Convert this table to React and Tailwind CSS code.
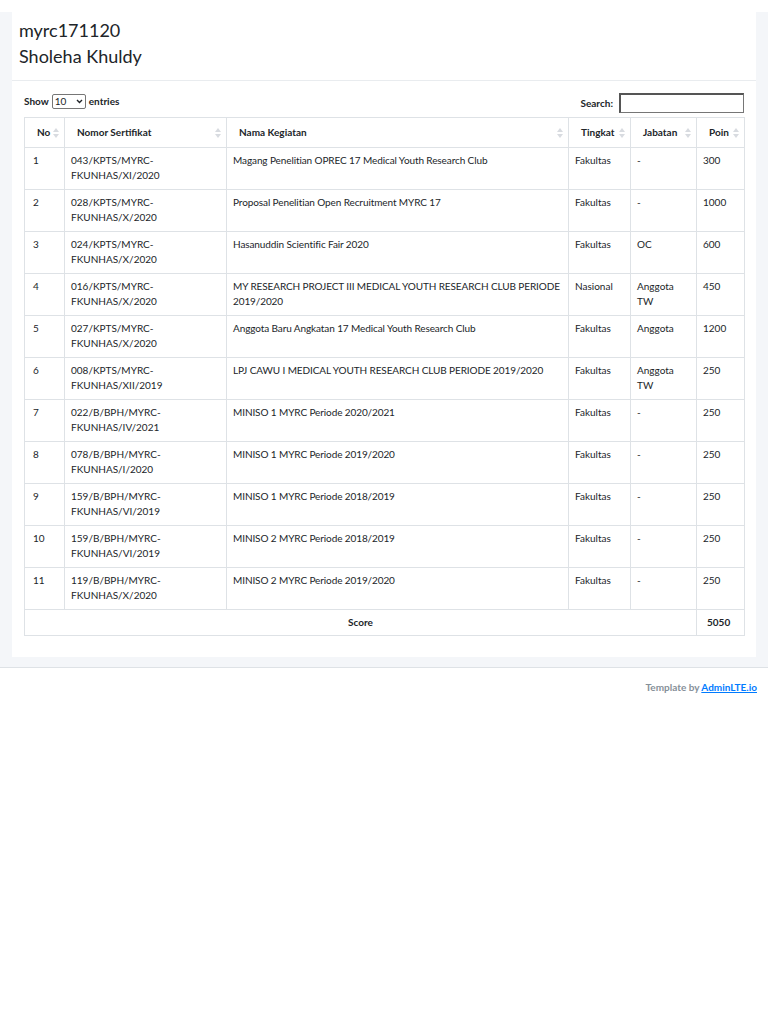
import React from 'react';

const rows = [
  ['1', ['043/KPTS/MYRC-', 'FKUNHAS/XI/2020'], 'Magang Penelitian OPREC 17 Medical Youth Research Club', 'Fakultas', ['-'], '300'],
  ['2', ['028/KPTS/MYRC-', 'FKUNHAS/X/2020'], 'Proposal Penelitian Open Recruitment MYRC 17', 'Fakultas', ['-'], '1000'],
  ['3', ['024/KPTS/MYRC-', 'FKUNHAS/X/2020'], 'Hasanuddin Scientific Fair 2020', 'Fakultas', ['OC'], '600'],
  ['4', ['016/KPTS/MYRC-', 'FKUNHAS/X/2020'], 'MY RESEARCH PROJECT III MEDICAL YOUTH RESEARCH CLUB PERIODE 2019/2020', 'Nasional', ['Anggota', 'TW'], '450'],
  ['5', ['027/KPTS/MYRC-', 'FKUNHAS/X/2020'], 'Anggota Baru Angkatan 17 Medical Youth Research Club', 'Fakultas', ['Anggota'], '1200'],
  ['6', ['008/KPTS/MYRC-', 'FKUNHAS/XII/2019'], 'LPJ CAWU I MEDICAL YOUTH RESEARCH CLUB PERIODE 2019/2020', 'Fakultas', ['Anggota', 'TW'], '250'],
  ['7', ['022/B/BPH/MYRC-', 'FKUNHAS/IV/2021'], 'MINISO 1 MYRC Periode 2020/2021', 'Fakultas', ['-'], '250'],
  ['8', ['078/B/BPH/MYRC-', 'FKUNHAS/I/2020'], 'MINISO 1 MYRC Periode 2019/2020', 'Fakultas', ['-'], '250'],
  ['9', ['159/B/BPH/MYRC-', 'FKUNHAS/VI/2019'], 'MINISO 1 MYRC Periode 2018/2019', 'Fakultas', ['-'], '250'],
  ['10', ['159/B/BPH/MYRC-', 'FKUNHAS/VI/2019'], 'MINISO 2 MYRC Periode 2018/2019', 'Fakultas', ['-'], '250'],
  ['11', ['119/B/BPH/MYRC-', 'FKUNHAS/X/2020'], 'MINISO 2 MYRC Periode 2019/2020', 'Fakultas', ['-'], '250'],
];

const headers = [
  ['No', 'w-[40px]'],
  ['Nomor Sertifikat', 'w-[162px]'],
  ['Nama Kegiatan', 'w-[342px]'],
  ['Tingkat', 'w-[62px]'],
  ['Jabatan', 'w-[66px]'],
  ['Poin', 'w-[48px]'],
];

function SortIcon() {
  return (
    <svg width="6" height="10" viewBox="0 0 6 10" className="absolute right-[5px] top-[10px]">
      <path d="M3 0 L6 4 L0 4 Z" fill="#d8dbe0" />
      <path d="M3 10 L6 6 L0 6 Z" fill="#d8dbe0" />
    </svg>
  );
}

export default function App() {
  const font = { fontFamily: '"Source Sans Pro", Lato, "Liberation Sans", sans-serif' };
  const cell = 'border border-[#dee2e6] pl-[6px] pr-[4px] pt-[5px] align-top';
  return (
    <div className="min-h-[1024px] bg-white text-[#212529]" style={font}>
      <div className="h-[12px] bg-white" />
      <div className="bg-[#f4f6f9] px-3 pb-[10px]">
        <div className="bg-white">
          <div className="px-[7px] pt-[5px] pb-[11px] border-b border-[#e9ecef]">
            <div className="text-[18px] leading-[26px]">myrc171120</div>
            <div className="text-[18px] leading-[26px]">Sholeha Khuldy</div>
          </div>
          <div className="px-3 pt-[8px] pb-[21px]">
            <div className="flex items-start justify-between h-[24px] mb-[4px]">
              <div className="flex items-center text-[10px] font-bold gap-[3px] mt-[5px]">
                <span>Show</span>
                <div className="h-[15px] w-[34px] border border-[#767676] rounded-[2px] flex items-center justify-between px-[2px] font-normal text-[10px] bg-white">
                  <span>10</span>
                  <svg width="7" height="5" viewBox="0 0 7 5"><path d="M1 1 L3.5 3.5 L6 1" stroke="#212529" strokeWidth="1.4" fill="none" /></svg>
                </div>
                <span>entries</span>
              </div>
              <div className="flex items-center text-[10px] font-bold gap-[6px] mt-[4px]">
                <span>Search:</span>
                <div className="w-[125px] h-[20px] border border-[#767676] border-t-[#555] border-l-[#555] border-l-2 border-t-2 bg-white" />
              </div>
            </div>
            <table className="w-full border-collapse text-[10px] leading-[15px] table-fixed">
              <thead>
                <tr>
                  {headers.map(([h, w]) => (
                    <th key={h} className={`${w} relative border border-[#dee2e6] h-[30px] pl-[12px] pr-[14px] text-left font-bold align-middle`}>
                      {h}
                      <SortIcon />
                    </th>
                  ))}
                </tr>
              </thead>
              <tbody>
                {rows.map((r) => (
                  <tr key={r[0]}>
                    <td className="border border-[#dee2e6] h-[42px] pl-[8px] pr-[4px] pt-[5px] align-top">{r[0]}</td>
                    <td className={cell}>
                      {r[1][0]}<br />{r[1][1]}
                    </td>
                    <td className="border border-[#dee2e6] pl-[6px] pr-0 pt-[5px] align-top tracking-[-0.1px]">{r[2]}</td>
                    <td className={cell}>{r[3]}</td>
                    <td className={cell}>
                      {r[4].map((j, i) => (
                        <div key={i}>{j}</div>
                      ))}
                    </td>
                    <td className={cell}>{r[5]}</td>
                  </tr>
                ))}
              </tbody>
              <tfoot>
                <tr>
                  <td colSpan={5} className="border border-[#dee2e6] h-[26px] text-center font-bold align-middle">Score</td>
                  <td className="border border-[#dee2e6] pl-[10px] font-bold align-middle">5050</td>
                </tr>
              </tfoot>
            </table>
          </div>
        </div>
      </div>
      <div className="border-t border-[#dee2e6] flex justify-end px-[11px] pt-[12px] pb-[12px] text-[10px] font-bold text-[#869099]">
        <span>
          Template by <span className="text-[#007bff] underline">AdminLTE.io</span>
        </span>
      </div>
    </div>
  );
}
